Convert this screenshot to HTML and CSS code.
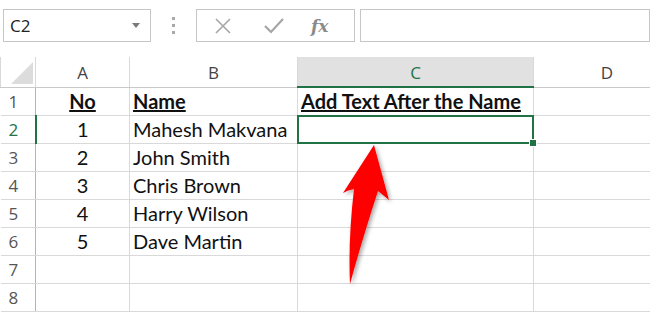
FILE: index.html
```html
<!DOCTYPE html>
<html lang="en">
<head>
  <meta charset="UTF-8">
  <meta name="viewport" content="width=device-width, initial-scale=1.0">
  <title>Add Text After the Name</title>
  <link rel="stylesheet" href="styles.css">
</head>
<body>
  <div class="formula-bar">
    <div class="name-box">
      <span>C2</span>
      <svg class="name-box__arrow" width="8" height="5" viewBox="0 0 8 5"><path d="M0 0 L8 0 L4 5 Z" fill="#7a7a7a"/></svg>
    </div>
    <div class="grip">
      <span></span><span></span><span></span>
    </div>
    <div class="fx-buttons">
      <svg width="20" height="20" viewBox="0 0 20 20"><path d="M3 3 L17 17 M17 3 L3 17" stroke="#a6a6a6" stroke-width="1.6" fill="none"/></svg>
      <svg width="22" height="20" viewBox="0 0 22 20"><path d="M2 10 L8 16 L20 3" stroke="#a6a6a6" stroke-width="2.2" fill="none"/></svg>
      <span class="fx">fx</span>
    </div>
    <div class="formula-input"></div>
  </div>

  <div class="sheet">
    <table class="grid">
      <colgroup>
        <col style="width:35px">
        <col style="width:94px">
        <col style="width:168px">
        <col style="width:236px">
        <col style="width:147px">
      </colgroup>
      <tr class="col-heads">
        <th class="corner"><div class="corner__tri"></div></th>
        <th>A</th>
        <th>B</th>
        <th class="is-active">C</th>
        <th>D</th>
      </tr>
      <tr>
        <th class="row-head">1</th>
        <td class="num"><b>No</b></td>
        <td><b>Name</b></td>
        <td><b>Add Text After the Name</b></td>
        <td></td>
      </tr>
      <tr>
        <th class="row-head is-active">2</th>
        <td class="num">1</td>
        <td>Mahesh Makvana</td>
        <td class="selected"><div class="selection"><div class="fill-handle"></div></div></td>
        <td></td>
      </tr>
      <tr>
        <th class="row-head">3</th>
        <td class="num">2</td>
        <td>John Smith</td>
        <td></td>
        <td></td>
      </tr>
      <tr>
        <th class="row-head">4</th>
        <td class="num">3</td>
        <td>Chris Brown</td>
        <td></td>
        <td></td>
      </tr>
      <tr>
        <th class="row-head">5</th>
        <td class="num">4</td>
        <td>Harry Wilson</td>
        <td></td>
        <td></td>
      </tr>
      <tr>
        <th class="row-head">6</th>
        <td class="num">5</td>
        <td>Dave Martin</td>
        <td></td>
        <td></td>
      </tr>
      <tr>
        <th class="row-head">7</th>
        <td></td><td></td><td></td><td></td>
      </tr>
      <tr>
        <th class="row-head">8</th>
        <td></td><td></td><td></td><td></td>
      </tr>
    </table>
  </div>

  <!-- red callout arrow pointing at C2 -->
  <svg class="arrow" width="650" height="314" viewBox="0 0 650 314">
    <defs>
      <filter id="shadow" x="-50%" y="-20%" width="200%" height="140%">
        <feDropShadow dx="2" dy="2" stdDeviation="2" flood-color="#000" flood-opacity="0.35"/>
      </filter>
    </defs>
    <path d="M374 145 L389 200 Q383 195 378 191 Q362 240 350 284 Q348 240 354 189 Q348 190 343 193 Z" fill="#ff0000" filter="url(#shadow)"/>
  </svg>
</body>
</html>
```

FILE: styles.css
```css
body {
  margin: 0;
  width: 650px;
  height: 314px;
  overflow: hidden;
  background-color: #ffffff;
  font-family: "Open Sans", "Noto Sans", sans-serif;
  position: relative;
}

/* formula bar */
.formula-bar {
  display: flex;
  align-items: center;
  height: 33px;
  padding: 9px 0 0 3px;
}

.name-box {
  box-sizing: border-box;
  width: 148px;
  height: 33px;
  border: 1px solid #c6c6c6;
  display: flex;
  align-items: center;
  justify-content: space-between;
  padding: 0 10px 0 6px;
  font-size: 17px;
  color: #222;
}

.grip {
  width: 45px;
  display: flex;
  flex-direction: column;
  align-items: center;
  gap: 4px;
}

.grip span {
  width: 3px;
  height: 3px;
  background-color: #a9a9a9;
}

.fx-buttons {
  box-sizing: border-box;
  width: 159px;
  height: 33px;
  border: 1px solid #c6c6c6;
  display: flex;
  align-items: center;
  padding-left: 16px;
  gap: 30px;
}

.fx {
  font-family: "DejaVu Serif", "Liberation Serif", serif;
  font-style: italic;
  font-weight: bold;
  font-size: 17px;
  color: #8a8a8a;
  margin-left: -4px;
}

.formula-input {
  box-sizing: border-box;
  flex: 1;
  height: 33px;
  margin-left: 5px;
  border: 1px solid #c6c6c6;
}

/* sheet grid */
.sheet {
  margin-top: 15px;
}

.grid {
  border-collapse: collapse;
  table-layout: fixed;
  width: 680px;
}

.grid tr {
  height: 28px;
}

.grid td,
.grid th {
  border: 1px solid #d9d9d9;
  padding: 0 3px;
  white-space: nowrap;
  overflow: hidden;
}

.grid td {
  font-family: "Lato", "Open Sans", sans-serif;
  font-size: 20px;
  line-height: 24px;
  color: #111;
}

.grid td b {
  text-decoration: underline;
}

.grid td.num {
  text-align: center;
}

.col-heads th {
  font-weight: normal;
  font-size: 17px;
  color: #444;
  border-top: none;
  border-bottom-color: #c8c8c8;
  height: 27px;
  padding-top: 2px;
}

.col-heads th.is-active {
  background-color: #e1e1e1;
  color: #217346;
  border-bottom: 2px solid #217346;
}

.corner {
  position: relative;
  border-left: none;
}

.corner__tri {
  position: absolute;
  right: 2px;
  bottom: 3px;
  width: 0;
  height: 0;
  border-left: 22px solid transparent;
  border-bottom: 22px solid #dcdcdc;
}

.row-head {
  font-weight: normal;
  font-size: 17px;
  color: #555;
  text-align: left;
  padding-left: 8px !important;
  border-left: none !important;
  border-right: 1px solid #b4b4b4 !important;
}

.row-head.is-active {
  color: #217346;
  border-right: 2px solid #217346 !important;
}

.grid td.selected {
  position: relative;
  overflow: visible;
}

.selection {
  position: absolute;
  left: -1px;
  top: -1px;
  right: -1px;
  bottom: -1px;
  border: 2px solid #217346;
}

.fill-handle {
  position: absolute;
  right: -5px;
  bottom: -5px;
  width: 6px;
  height: 6px;
  background-color: #217346;
  border: 1px solid #fff;
}

.arrow {
  position: absolute;
  left: 0;
  top: 0;
  pointer-events: none;
}
```
